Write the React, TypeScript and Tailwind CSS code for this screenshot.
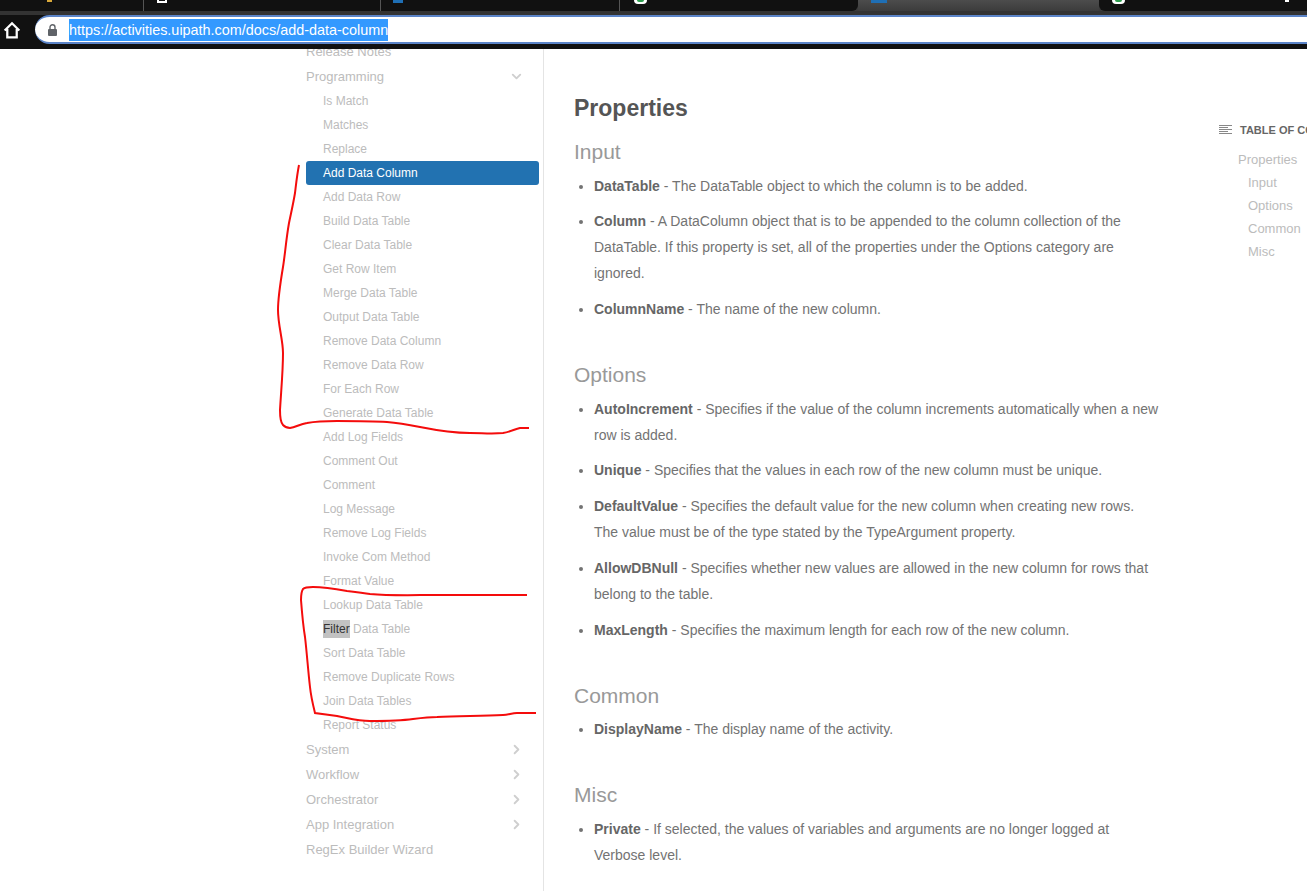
import { ChevronDown, ChevronRight } from "lucide-react";

const programming = [
  "Is Match",
  "Matches",
  "Replace",
  "Add Data Column",
  "Add Data Row",
  "Build Data Table",
  "Clear Data Table",
  "Get Row Item",
  "Merge Data Table",
  "Output Data Table",
  "Remove Data Column",
  "Remove Data Row",
  "For Each Row",
  "Generate Data Table",
  "Add Log Fields",
  "Comment Out",
  "Comment",
  "Log Message",
  "Remove Log Fields",
  "Invoke Com Method",
  "Format Value",
  "Lookup Data Table",
  "Filter Data Table",
  "Sort Data Table",
  "Remove Duplicate Rows",
  "Join Data Tables",
  "Report Status",
];

function SideItem({ label }: { label: string }) {
  if (label === "Add Data Column") {
    return (
      <div className="h-6 flex items-center pl-[17px] bg-[#2272b1] text-white rounded-[3px]">
        {label}
      </div>
    );
  }
  if (label === "Filter Data Table") {
    return (
      <div className="h-6 flex items-center pl-[17px]">
        <span className="bg-[#c2c2c2] text-[#333]">Filter</span>
        <span>&nbsp;Data Table</span>
      </div>
    );
  }
  return <div className="h-6 flex items-center pl-[17px]">{label}</div>;
}

function TopItem({ label, arrow }: { label: string; arrow?: boolean }) {
  return (
    <div className="h-[25px] flex items-center justify-between text-[13px] pr-[15px]">
      <span>{label}</span>
      {arrow && <ChevronRight size={15} strokeWidth={3} className="text-[#cfcfcf]" />}
    </div>
  );
}

function Prop({ name, children }: { name: string; children: React.ReactNode }) {
  return (
    <li className="mb-[9.7px]">
      <strong className="font-bold text-[#666]">{name}</strong> - {children}
    </li>
  );
}

function Section({ title, children }: { title: string; children: React.ReactNode }) {
  return (
    <section className="mb-[38.2px]">
      <h3 className="text-[21px] leading-[30px] text-[#999] mb-[5.6px]">{title}</h3>
      <ul className="list-disc pl-5">{children}</ul>
    </section>
  );
}

function TabCircle() {
  return (
    <div className="w-[13px] h-[4px] bg-white rounded-b-full flex justify-center">
      <div className="w-[7px] h-[2px] bg-[#2e9e4f] rounded-b-full" />
    </div>
  );
}

export default function App() {
  return (
    <div className="relative h-[891px] overflow-hidden bg-white font-['Liberation_Sans',Arial,sans-serif]">
      {/* browser chrome */}
      <div className="relative z-10 h-[49px] bg-[#111] flex flex-col">
        <div className="h-[11px] flex bg-[#3a3a3a] text-white shrink-0">
          <div className="w-[144px] bg-[#111] border-r border-[#555] pl-[47px]">
            <div className="w-[5px] h-[2px] bg-[#d9a93a]" />
          </div>
          <div className="w-[237px] bg-[#111] border-r border-[#555] pl-[13px]">
            <div className="w-[10px] h-[3px] border-x-2 border-b-2 border-white" />
          </div>
          <div className="w-[239px] bg-[#111] border-r border-[#555] pl-[12px]">
            <div className="w-[10px] h-[3px] bg-[#1f6fb5]" />
          </div>
          <div className="w-[238px] bg-[#111] rounded-br-md pl-[14px]">
            <TabCircle />
          </div>
          <div className="w-[241px] bg-gradient-to-b from-[#4c4c4c] to-[#3c3c3c] pl-[13px]">
            <div className="w-4 h-[3px] bg-[#1f6fb5]" />
          </div>
          <div className="flex-1 bg-[#111] rounded-bl-md pl-[13px] flex">
            <TabCircle />
            <div className="ml-[160px] w-[4px] h-[2px] bg-white" />
          </div>
        </div>
        <div className="h-[4px] bg-[#333] shrink-0" />
        <div className="flex items-start flex-1 bg-[#111]">
          <div className="w-[24px] h-[29px] mr-[11px] flex items-center justify-center">
            <svg width="18" height="18" viewBox="0 0 16 16" fill="none" stroke="white" strokeWidth="2">
              <path d="M1.5 8.5 8 2l6.5 6.5M3.8 7v7.5h8.4V7" />
            </svg>
          </div>
          <div className="flex-1 h-[29px] bg-white border-y-2 border-[#5b84c8] rounded-l-full flex items-center pl-[13px]">
            <svg width="9" height="12" viewBox="0 0 9 12" className="mr-[12px] shrink-0">
              <path d="M2 5V3.2a2.5 2.5 0 0 1 5 0V5" fill="none" stroke="#5f6368" strokeWidth="1.4" />
              <rect x="0" y="5" width="9" height="7" rx="1" fill="#5f6368" />
            </svg>
            <span className="bg-[#3399ff] text-white text-[14.4px] leading-[22px]">
              https://activities.uipath.com/docs/add-data-column
            </span>
          </div>
        </div>
      </div>

      <div className="flex">
        {/* sidebar */}
        <aside className="w-[544px] shrink-0 h-[842px] border-r border-[#e4e4e4] pl-[306px] pr-1 text-[12px] text-[#bcbcbc] overflow-hidden">
          <div className="mt-[-10px]">
            <TopItem label="Release Notes" />
            <div className="h-[25px] flex items-center justify-between text-[13px] pr-[15px]">
              <span>Programming</span>
              <ChevronDown size={15} strokeWidth={3} className="text-[#cfcfcf]" />
            </div>
            {programming.map((p) => (
              <SideItem key={p} label={p} />
            ))}
            <TopItem label="System" arrow />
            <TopItem label="Workflow" arrow />
            <TopItem label="Orchestrator" arrow />
            <TopItem label="App Integration" arrow />
            <TopItem label="RegEx Builder Wizard" />
          </div>
        </aside>

        {/* article */}
        <main className="w-[675px] shrink-0 pl-[30px] pr-[59px] pt-[44px] text-[14px] leading-[26px] text-[#737373]">
          <h2 className="text-[23px] leading-[30px] font-bold text-[#555] mb-[14px]">Properties</h2>
          <Section title="Input">
            <Prop name="DataTable">The DataTable object to which the column is to be added.</Prop>
            <Prop name="Column">
              A DataColumn object that is to be appended to the column collection of the DataTable. If this
              property is set, all of the properties under the Options category are ignored.
            </Prop>
            <Prop name="ColumnName">The name of the new column.</Prop>
          </Section>
          <Section title="Options">
            <Prop name="AutoIncrement">
              Specifies if the value of the column increments automatically when a new row is added.
            </Prop>
            <Prop name="Unique">Specifies that the values in each row of the new column must be unique.</Prop>
            <Prop name="DefaultValue">
              Specifies the default value for the new column when creating new rows. The value must be of the type
              stated by the TypeArgument property.
            </Prop>
            <Prop name="AllowDBNull">
              Specifies whether new values are allowed in the new column for rows that belong to the table.
            </Prop>
            <Prop name="MaxLength">Specifies the maximum length for each row of the new column.</Prop>
          </Section>
          <Section title="Common">
            <Prop name="DisplayName">The display name of the activity.</Prop>
          </Section>
          <Section title="Misc">
            <Prop name="Private">
              If selected, the values of variables and arguments are no longer logged at Verbose level.
            </Prop>
          </Section>
        </main>

        {/* table of contents */}
        <nav className="shrink-0 pt-[72px] text-[13px] text-[#bcbcbc] whitespace-nowrap">
          <div className="flex items-center gap-[8px] h-[18px] text-[11px] font-bold text-[#666]">
            <svg width="13" height="12" viewBox="0 0 13 12" stroke="#888" strokeWidth="1">
              <path d="M0 1.5h13M0 3.5h9M0 5.5h13M0 7.5h9M0 9.5h13" />
            </svg>
            <span>TABLE OF CONTENTS</span>
          </div>
          <div className="pl-[19px] mt-[9px] leading-[23px]">
            <div>Properties</div>
            <div className="pl-[10px]">Input</div>
            <div className="pl-[10px]">Options</div>
            <div className="pl-[10px]">Common</div>
            <div className="pl-[10px]">Misc</div>
          </div>
        </nav>
      </div>

      {/* hand-drawn red marks over the page */}
      <svg className="absolute inset-0 pointer-events-none" width="1307" height="891" fill="none" stroke="#f40c0c" strokeWidth="2">
        <path d="M299 165C297 175 296 185 295 193C293 205 291 213 289 223C286 240 285 255 283 267C280 285 278 297 278 310C278 325 283 340 283 353C283 372 281 392 280 410C280 418 281 423 283 425C286 428 288 428 290 428C296 427 300 424 307 423C318 421 327 421 337 421C355 421 372 421 387 422C400 423 410 425 420 427C435 430 450 433 470 433C482 433 492 434 503 433C510 432 515 429 520 428C523 428 526 428 529 428" />
        <path d="M527 595C497 595 467 595 437 595C415 595 392 596 370 594C362 593 356 592 347 591C336 589 324 587 313 587C308 587 305 587 303 589C301 592 301 596 301 600C302 613 303 625 305 637C307 654 308 670 310 687C311 697 313 705 315 713C322 714 330 715 337 716C348 718 358 721 370 721C385 721 399 721 413 719C421 718 429 717 437 717C459 716 481 716 503 715C508 715 512 713 517 713C523 713 530 713 536 713" />
      </svg>
    </div>
  );
}
